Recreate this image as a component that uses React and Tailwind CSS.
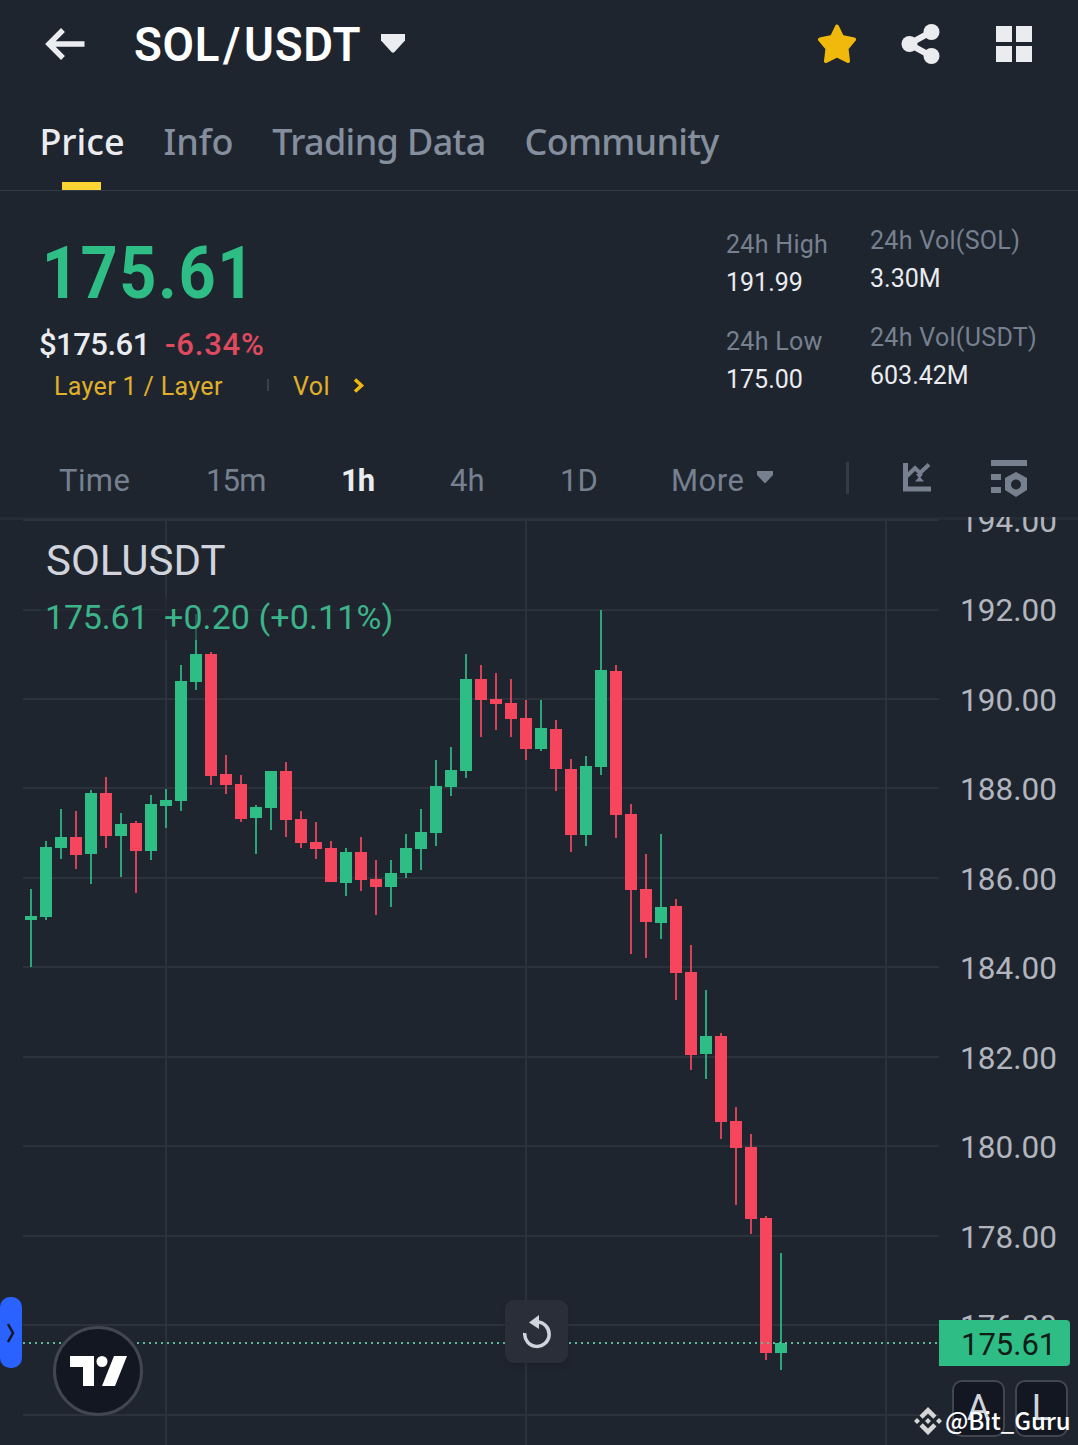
import React, { useState } from 'react';

const GREEN = '#2ebd85';
const RED = '#f6465d';

// [direction, wick top, body top, body bottom, wick bottom]
const candles = [
  ['up', 889, 916, 920, 967],
  ['up', 841, 847, 917, 920],
  ['up', 809, 837, 848, 859],
  ['down', 811, 837, 855, 869],
  ['up', 790, 793, 854, 884],
  ['down', 777, 793, 836, 848],
  ['up', 813, 824, 836, 877],
  ['down', 821, 823, 851, 893],
  ['up', 795, 804, 851, 860],
  ['up', 789, 800, 806, 828],
  ['up', 665, 681, 801, 811],
  ['up', 614, 654, 682, 690],
  ['down', 652, 654, 776, 785],
  ['down', 755, 774, 785, 794],
  ['down', 775, 784, 819, 822],
  ['up', 805, 807, 818, 854],
  ['up', 771, 771, 808, 830],
  ['down', 762, 771, 820, 837],
  ['down', 811, 819, 843, 848],
  ['down', 822, 842, 849, 859],
  ['down', 841, 848, 882, 882],
  ['up', 848, 852, 883, 896],
  ['down', 837, 852, 880, 891],
  ['down', 860, 879, 887, 915],
  ['up', 860, 873, 887, 907],
  ['up', 834, 848, 873, 878],
  ['up', 809, 832, 849, 870],
  ['up', 760, 786, 833, 846],
  ['up', 747, 770, 787, 796],
  ['up', 654, 679, 771, 778],
  ['down', 665, 679, 700, 737],
  ['down', 673, 699, 704, 730],
  ['down', 679, 703, 719, 737],
  ['down', 700, 718, 749, 760],
  ['up', 700, 728, 749, 751],
  ['down', 720, 729, 769, 791],
  ['down', 759, 769, 835, 852],
  ['up', 756, 766, 835, 846],
  ['up', 610, 670, 767, 775],
  ['down', 665, 671, 815, 838],
  ['down', 804, 814, 890, 954],
  ['down', 854, 889, 922, 958],
  ['up', 834, 907, 923, 939],
  ['down', 899, 906, 973, 1000],
  ['down', 945, 972, 1055, 1070],
  ['up', 990, 1036, 1054, 1079],
  ['down', 1033, 1036, 1122, 1139],
  ['down', 1107, 1121, 1148, 1205],
  ['down', 1134, 1147, 1219, 1234],
  ['down', 1216, 1218, 1353, 1360],
  ['up', 1253, 1343, 1353, 1370],
];

const gridY = [520, 610, 699, 788, 878, 967, 1057, 1146, 1236, 1325, 1415];
const gridX = [166, 526, 886];

const tabs = [
  { name: 'Price', className: 'w-[84px]' },
  { name: 'Info', className: 'w-[69px]' },
  { name: 'Trading Data', className: 'w-[212px] tracking-[-0.65px]' },
  { name: 'Community', className: 'w-[193px] tracking-[-0.75px]' },
];

const intervals = [
  { name: 'Time', className: 'w-[147px] tracking-[0.4px]' },
  { name: '15m', className: 'w-[135px] tracking-[-0.8px]' },
  { name: '1h', className: 'w-[109px] tracking-[-1px]' },
  { name: '4h', className: 'w-[110px]' },
  { name: '1D', className: 'w-[111px]' },
];

const Header = () => (
  <header className="flex h-[88px] items-center pl-[45px] pr-[46px]">
    <svg className="h-8 w-10" viewBox="0 0 40 32" fill="none" stroke="#eaecef" strokeWidth="5.5">
      <path d="M39.5 16H5M18 2L4 16L18 30" />
    </svg>
    <h1 className="ml-[49px] w-[236px] origin-left scale-x-[0.95] whitespace-nowrap pt-0.5 text-[48px] font-semibold leading-none tracking-[0.8px] text-white">
      SOL<span className="mx-[3px]">/</span>USDT
    </h1>
    <svg className="-mt-0.5 ml-[11px] h-[19px] w-6" viewBox="0 0 24 19" fill="#eaecef">
      <path d="M0 0H24V6.500L13.500 18Q12 19.500 10.500 18L0 6.500Z" />
    </svg>
    <div className="ml-auto flex items-center">
      <svg className="h-10 w-10" viewBox="0 0 40 40" fill="#f0b90b" stroke="#f0b90b" strokeWidth="4" strokeLinejoin="round">
        <path d="M20 2.500L25 13L37 15.500L29.500 24.500L31 37L20 31.500L9 37L10.500 24.500L3 15.500L15 13Z" />
      </svg>
      <svg className="ml-11 h-10 w-[39px]" viewBox="0 0 39 40" fill="#eaecef">
        <path d="M8 20L30 8M8 20L30 32" stroke="#eaecef" strokeWidth="6" />
        <circle cx="8.500" cy="20" r="8" />
        <circle cx="30.500" cy="8" r="8" />
        <circle cx="30.500" cy="32" r="8" />
      </svg>
      <div className="ml-14 grid grid-cols-2 gap-1">
        <span className="h-4 w-4 bg-[#eaecef]" />
        <span className="h-4 w-4 bg-[#eaecef]" />
        <span className="h-4 w-4 bg-[#eaecef]" />
        <span className="h-4 w-4 bg-[#eaecef]" />
      </div>
    </div>
  </header>
);

const Stat = ({ label, value }) => (
  <div className="whitespace-nowrap text-[25px] leading-[38px]">
    <div className="tracking-[0.3px] text-[#76808f]">{label}</div>
    <div className="text-[#eaecef]">{value}</div>
  </div>
);

const Summary = () => (
  <section className="flex h-[251px] justify-between pt-[39px]">
    <div className="pl-[39px]">
      <div className="h-[84px] origin-left scale-x-[0.9] whitespace-nowrap pl-[3px] text-[72px] font-bold leading-[87px] tracking-[1.8px] text-[#2ebd85]">175.61</div>
      <div className="flex h-[60px] items-center whitespace-nowrap pt-0.5 text-[31px] font-medium">
        <span className="w-[126px] tracking-[-0.5px] text-[#eaecef]">$175.61</span>
        <span className="tracking-[0.8px] text-[#e04a5f]">-6.34%</span>
      </div>
      <div className="flex h-[26px] items-center whitespace-nowrap pl-[15px] text-[25px] text-[#e0b02a]">
        <span className="w-[213px] tracking-[0.35px]">Layer 1 / Layer</span>
        <span className="-mt-1 h-3 w-0.5 bg-[#39414d]" />
        <span className="ml-6 w-[60px] tracking-[0.5px]">Vol</span>
        <svg className="-mt-1 h-[15px] w-3" viewBox="0 0 12 15" fill="none" stroke="#f0b90b" strokeWidth="3.5">
          <path d="M2 1.500L8.500 7.500L2 13.500" />
        </svg>
      </div>
    </div>
    <div className="flex w-[352px]">
      <div className="-mt-[4px] flex w-[144px] flex-col gap-[21px]">
        <Stat label="24h High" value="191.99" />
        <Stat label="24h Low" value="175.00" />
      </div>
      <div className="-mt-2 flex flex-col gap-[21px]">
        <Stat label="24h Vol(SOL)" value="3.30M" />
        <Stat label="24h Vol(USDT)" value="603.42M" />
      </div>
    </div>
  </section>
);

const IntervalBar = ({ active, onSelect }) => (
  <div className="flex h-[75px] items-center whitespace-nowrap pl-[59px] text-[31px] text-[#76808f]">
    {intervals.map(({ name, className }) => (
      <button
        key={name}
        onClick={() => onSelect(name)}
        className={`pt-[3px] text-left ${className} ${active === name ? 'font-bold text-[#eaecef]' : ''}`}
      >
        {name}
      </button>
    ))}
    <button className="flex w-[175px] items-center pt-[3px] text-left">
      <span className="w-[86px] tracking-[0.5px]">More</span>
      <svg className="-mt-2 h-3 w-4" viewBox="0 0 16 12" fill="#76808f">
        <path d="M0 0H16V4L9 11.500Q8 12.500 7 11.500L0 4Z" />
      </svg>
    </button>
    <span className="-mt-1 h-8 w-[3px] bg-[#333b47]" />
    <svg className="-mt-1.5 ml-[54px] h-[30px] w-7" viewBox="0 0 28 30" fill="none" stroke="#76808f">
      <path d="M2.500 1V27H28" strokeWidth="5" />
      <path d="M4 14L12 6L17 11L26 2.500" strokeWidth="4" />
      <path d="M12 19.500L15.500 15.500L13 12H20L17.500 15.500L21 19.500Z" fill="#76808f" stroke="none" />
    </svg>
    <svg className="-mt-1 ml-[60px] h-[38px] w-9" viewBox="0 0 36 38" fill="#76808f">
      <path d="M0 1H36V7H0ZM0 15H10V21H0ZM0 28H10V34H0Z" />
      <path fillRule="evenodd" d="M25 13L36 19V31L25 38L14 31V19ZM25 20.500A5 5 0 1 0 25 30.500A5 5 0 1 0 25 20.500Z" />
    </svg>
  </div>
);

const Candle = ({ x, candle }) => {
  const [dir, high, top, bottom, low] = candle;
  const color = dir === 'up' ? GREEN : RED;
  return (
    <g fill={color}>
      <rect x={x - 1} y={high} width="2" height={low - high} opacity="0.85" />
      <rect x={x - 6} y={top} width="12" height={bottom - top} />
    </g>
  );
};

const Chart = () => (
  <section className="relative h-[928px] overflow-hidden">
    <svg className="block h-[928px] w-[1078px]" viewBox="0 517 1078 928">
      <rect x="0" y="517" width="1078" height="3" fill="#252c36" />
      <g stroke="#2b323c" strokeWidth="2">
        {gridY.map(y => <line key={y} x1="23" x2="939" y1={y} y2={y} />)}
        {gridX.map(x => <line key={x} x1={x} x2={x} y1="519" y2="1445" />)}
      </g>
      {candles.map((candle, i) => <Candle key={i} x={31 + i * 15} candle={candle} />)}
      <line x1="23" x2="939" y1="1343" y2="1343" stroke="#5fb89a" strokeWidth="2" strokeDasharray="2 4" />
      <g fill="#b2b5be" fontSize="31.500">
        {gridY.slice(0, 10).map((y, i) => (
          <text key={y} x="960" y={y + (i === 1 ? 11 : 12)} textLength="97">{(194 - i * 2).toFixed(2)}</text>
        ))}
      </g>
    </svg>

    <div className="absolute left-[40px] top-[21px] whitespace-nowrap">
      <div className="h-[48px] pl-[6px] text-[42px] leading-[46px] text-[#d1d4dc]">SOLUSDT</div>
      <div className="mt-[11px] flex h-[43px] w-[356px] bg-[#1f252f]/60 pl-[5px] text-[34px] leading-[41px] text-[#3cb388]">
        <span className="w-[119px] tracking-[-0.2px]">175.61</span>
        <span className="tracking-[0.1px]">+0.20 (+0.11%)</span>
      </div>
    </div>

    <button className="absolute left-0 top-[780px] flex h-[71px] w-[22px] items-center justify-center rounded-[10px] bg-[#2962ff]">
      <svg className="h-5 w-2" viewBox="0 0 8 20" fill="none" stroke="#131722" strokeWidth="2.500">
        <path d="M1 1L6 10L1 19" />
      </svg>
    </button>

    <div className="absolute left-[53px] top-[809px] flex h-[90px] w-[90px] items-center justify-center rounded-full border-[3px] border-[#434651] bg-[#131722]">
      <svg className="h-[30px] w-[57px]" viewBox="0 0 57 30" fill="#fff">
        <path d="M0 0H24V30H13V11H0Z" />
        <circle cx="32" cy="5.500" r="5.500" />
        <path d="M44 0H57L45 30H32Z" />
      </svg>
    </div>

    <button className="absolute left-[505px] top-[783px] flex h-[63px] w-[63px] items-center justify-center rounded-[9px] bg-[#2a2e39] shadow-md">
      <svg className="h-[34px] w-7" viewBox="0 0 28 34">
        <path d="M1.800 18A12.200 12.200 0 1 0 14 7" fill="none" stroke="#d1d4dc" strokeWidth="3.500" />
        <path d="M6 7.500L16 0V14Z" fill="#d1d4dc" />
      </svg>
    </button>

    <div className="absolute left-[939px] top-[803px] h-[46px] w-[131px] whitespace-nowrap rounded-r-[4px] bg-[#2ebd85] pl-[22px] text-[31px] leading-[49px] text-[#0f1c18]">175.61</div>

    <div className="absolute left-[952px] top-[863px] flex gap-[10px] text-[36px] leading-[53px] text-[#d1d4dc]">
      <button className="h-[57px] w-[53px] rounded-[10px] border-2 border-[#434651] bg-[#131722]">A</button>
      <button className="h-[57px] w-[53px] rounded-[10px] border-2 border-[#434651] bg-[#131722]">L</button>
    </div>

    <div className="absolute left-[914px] top-[886px] flex items-center whitespace-nowrap">
      <svg className="mt-0.5 h-7 w-7" viewBox="0 0 28 28" fill="#d6d6d6">
        <path d="M14 0L22.500 8.500L19.300 11.700L14 6.400L8.700 11.700L5.500 8.500ZM14 28L22.500 19.500L19.300 16.300L14 21.600L8.700 16.300L5.500 19.500ZM3 11L6 14L3 17L0 14ZM25 11L28 14L25 17L22 14ZM14 11L17 14L14 17L11 14Z" />
      </svg>
      <span className="ml-[3px] font-['Noto_Sans_CJK_SC','Noto_Sans',sans-serif] text-[24px] font-medium leading-[34px] text-white">@Bit_Guru</span>
    </div>
  </section>
);

const App = () => {
  const [activeTab, setActiveTab] = useState('Price');
  const [activeInterval, setActiveInterval] = useState('1h');

  return (
    <div className="h-[1445px] w-[1078px] overflow-hidden bg-[#1f252f] font-[Roboto,sans-serif]">
      <Header />
      <nav className="flex h-[103px] gap-[40px] border-b border-[#333b47] pl-[40px]">
        {tabs.map(({ name, className }) => (
          <button
            key={name}
            onClick={() => setActiveTab(name)}
            className={`flex flex-col items-center whitespace-nowrap pt-[29px] font-['Noto_Sans',sans-serif] text-[36px] font-medium leading-[50px] ${className} ${activeTab === name ? 'text-[#eaecef]' : 'text-[#848e9c]'}`}
          >
            {name}
            {activeTab === name && <span className="mr-px mt-auto h-2 w-[39px] bg-[#fcd535]" />}
          </button>
        ))}
      </nav>
      <Summary />
      <IntervalBar active={activeInterval} onSelect={setActiveInterval} />
      <Chart />
    </div>
  );
};

export default App;
